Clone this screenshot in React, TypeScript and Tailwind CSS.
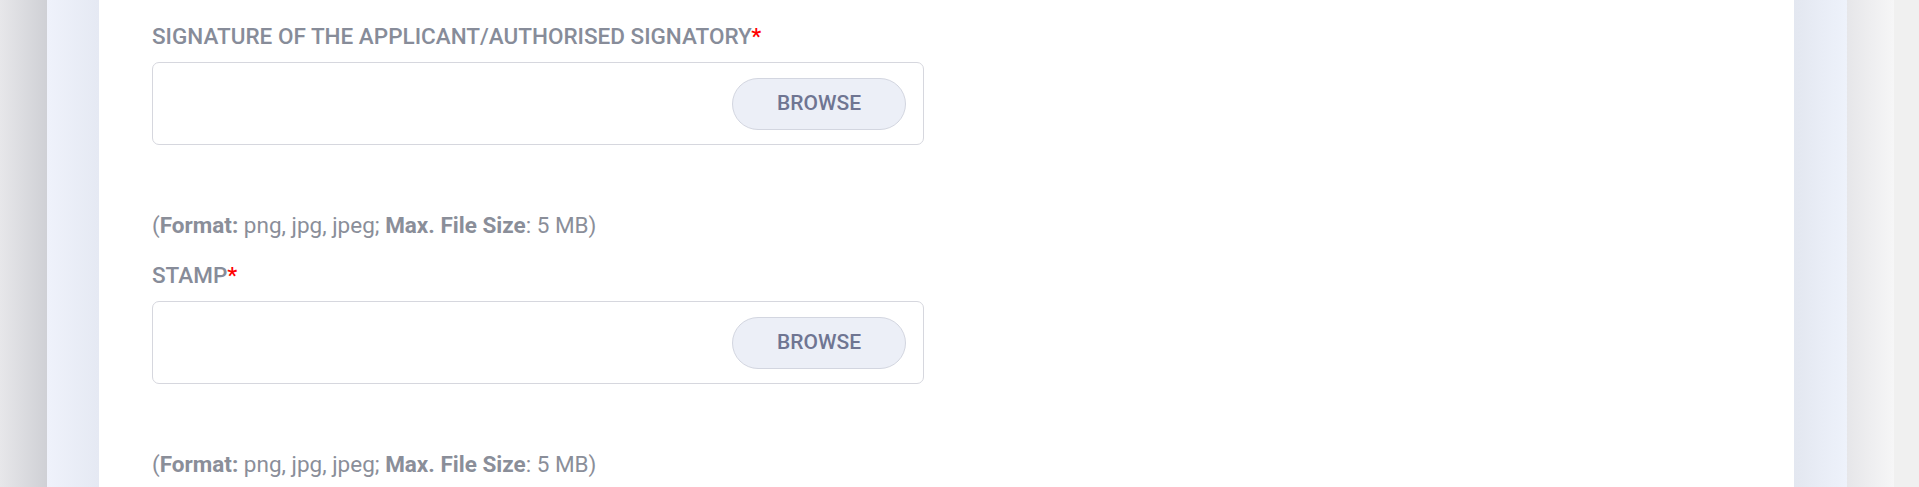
import React from "react";

function Field({ label }: { label: string }) {
  return (
    <div className="flex flex-col">
      <div className="text-[22.5px] leading-[26px] font-medium text-[#878c99] mb-[13px]">
        {label}
        <span className="text-[#ff0000]">*</span>
      </div>
      <div className="w-[772px] h-[83px] border border-[#d6d7de] rounded-[7px] bg-white flex items-center justify-end pr-[17px]">
        <button className="w-[174px] h-[52px] rounded-full bg-[#eceff7] border border-[#d3d6e0] text-[21px] font-medium text-[#6f7592]">
          BROWSE
        </button>
      </div>
      <div className="mt-[66px] text-[22.5px] leading-[28px] text-[#8a8e99]">
        (<span className="font-bold">Format:</span> png, jpg, jpeg; <span className="font-bold">Max. File Size</span>: 5 MB)
      </div>
    </div>
  );
}

export default function App() {
  return (
    <div
      className="w-[1919px] h-[487px] overflow-hidden flex bg-[#f0f0f0]"
      style={{ fontFamily: "Roboto, 'Noto Sans', sans-serif" }}
    >
      <div className="w-[47px] shrink-0 bg-linear-to-r from-[#e7e7ea] to-[#cfd0d5]" />
      <div className="w-[52px] shrink-0 bg-linear-to-r from-[#eff2fb] to-[#e5e9f3]" />
      <div className="w-[1695px] shrink-0 bg-white pl-[53px] pt-[23px] flex flex-col gap-[23px]">
        <Field label="SIGNATURE OF THE APPLICANT/AUTHORISED SIGNATORY" />
        <Field label="STAMP" />
      </div>
      <div className="w-[53px] shrink-0 bg-linear-to-r from-[#e3e7f0] to-[#eef2fb]" />
      <div className="w-[47px] shrink-0 bg-linear-to-r from-[#e6e6e9] to-[#f6f6f7]" />
    </div>
  );
}
